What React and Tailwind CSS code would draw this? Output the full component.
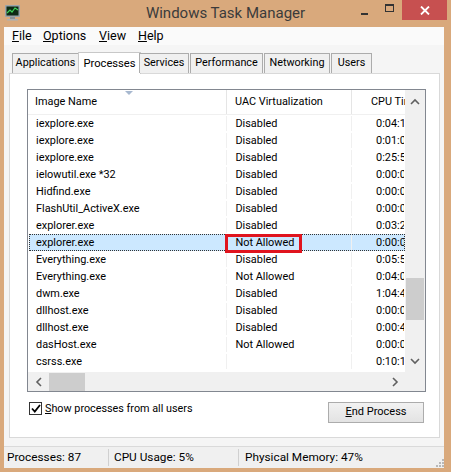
import React from 'react'

const FONT = { fontFamily: 'Roboto, "Noto Sans", sans-serif' }

const ROWS = [
  ['iexplore.exe', 'Disabled', '0:04:17'],
  ['iexplore.exe', 'Disabled', '0:01:08'],
  ['iexplore.exe', 'Disabled', '0:25:53'],
  ['ielowutil.exe *32', 'Disabled', '0:00:00'],
  ['Hidfind.exe', 'Disabled', '0:00:00'],
  ['FlashUtil_ActiveX.exe', 'Disabled', '0:00:00'],
  ['explorer.exe', 'Disabled', '0:03:21'],
  ['explorer.exe', 'Not Allowed', '0:00:00', true],
  ['Everything.exe', 'Disabled', '0:05:53'],
  ['Everything.exe', 'Not Allowed', '0:04:04'],
  ['dwm.exe', 'Disabled', '1:04:45'],
  ['dllhost.exe', 'Disabled', '0:00:00'],
  ['dllhost.exe', 'Disabled', '0:00:43'],
  ['dasHost.exe', 'Not Allowed', '0:00:00'],
  ['csrss.exe', '', '0:10:13'],
]

const TABS = [
  ['Applications', 'w-[67px]'],
  ['Processes', 'w-[63px]', true],
  ['Services', 'w-[50px]'],
  ['Performance', 'w-[73px]'],
  ['Networking', 'w-[66px]'],
  ['Users', 'w-[41px]'],
]

// small chevron used by the scrollbars
function Chevron({ dir }) {
  const d = {
    up: 'M1 6 L5 2 L9 6',
    down: 'M1 2 L5 6 L9 2',
    left: 'M6 1 L2 5 L6 9',
    right: 'M2 1 L6 5 L2 9',
  }[dir]
  const vert = dir === 'up' || dir === 'down'
  return (
    <svg width={vert ? 10 : 8} height={vert ? 8 : 10} viewBox={vert ? '0 0 10 8' : '0 0 8 10'}>
      <path d={d} fill="none" stroke="#606060" strokeWidth="1.6" />
    </svg>
  )
}

function AppIcon() {
  return (
    <svg width="17" height="17" viewBox="0 0 17 17">
      <rect x="1" y="1" width="15" height="12" rx="1" fill="#9aa3a8" />
      <rect x="2.5" y="2.5" width="12" height="9" fill="#0d2a14" />
      <path d="M3 9 L6 6 L8 8 L11 4 L14 6" fill="none" stroke="#3fd35a" strokeWidth="1.2" />
      <rect x="6" y="13" width="5" height="2" fill="#8a9296" />
      <rect x="3" y="15" width="11" height="1.5" fill="#aab1b5" />
    </svg>
  )
}

export default function App() {
  return (
    <div className="w-[451px] h-[472px] bg-[#d9a97c] flex flex-col overflow-hidden text-black" style={FONT}>

      {/* ── Title bar ── */}
      <div className="h-[27px] flex shrink-0">
        <div className="w-[100px] pl-[4px] pt-[4px]">
          <AppIcon />
        </div>
        <div className="flex-1 text-center text-[15px] leading-[27px] text-[#3b3b3b]">
          Windows Task Manager
        </div>
        <div className="w-[100px] flex justify-end items-start pr-[4px]">
          <div className="w-[24px] h-[21px] flex items-center justify-center">
            <div className="w-[7px] h-[2px] bg-[#333] mt-[6px]" />
          </div>
          <div className="w-[26px] h-[21px] flex items-center justify-center">
            <div className="w-[9px] h-[8px] border border-[#333] border-t-2 -mt-[6px]" />
          </div>
          <div className="w-[45px] h-[20px] bg-[#c75050] flex items-center justify-center">
            <svg width="10" height="9" viewBox="0 0 10 9">
              <path d="M1 0.5 L9 8.5 M9 0.5 L1 8.5" stroke="#fff" strokeWidth="1.8" />
            </svg>
          </div>
        </div>
      </div>

      {/* ── Client area ── */}
      <div className="flex-1 ml-[4px] mr-[7px] mb-[4px] bg-[#f5f5f5] flex flex-col">

        {/* Menu */}
        <div className="h-[18px] flex pl-[8px] text-[12.5px] leading-[18px] bg-[#fafafa]">
          <span className="w-[31px]"><u>F</u>ile</span>
          <span className="w-[56px]"><u>O</u>ptions</span>
          <span className="w-[39px]"><u>V</u>iew</span>
          <span><u>H</u>elp</span>
        </div>

        {/* Tabs */}
        <div className="h-[28px] flex items-end pl-[8px] relative z-10 text-[10.8px]">
          {TABS.map(([label, w, active]) => (
            <div
              key={label}
              className={
                active
                  ? `${w} h-[22px] -mb-px -mx-[2px] bg-white border border-b-0 border-[#c8c8c8] flex items-start pt-[3px] justify-center text-[11.2px]`
                  : `${w} h-[20px] mr-px bg-[#f0f0f0] border border-b-0 border-[#acacac] flex items-center justify-center`
              }
            >
              {label}
            </div>
          ))}
        </div>

        {/* Tab page */}
        <div className="h-[365px] ml-[5px] mr-[4px] bg-white border border-[#d9d9d9] flex flex-col text-[10.9px]">

          {/* List box */}
          <div className="mt-[15px] ml-[17px] mr-[13px] h-[303px] border border-[#828790] flex flex-col">
            <div className="flex h-[282px]">
              <div className="w-[377px] flex flex-col">
                {/* header */}
                <div className="h-[25px] flex items-center relative border-b border-[#f0f0f0]">
                  <svg className="absolute left-[97px] top-[1px]" width="8" height="4" viewBox="0 0 8 4">
                    <path d="M0 0 L8 0 L4 4 Z" fill="#a7b8cf" />
                  </svg>
                  <div className="w-[199px] h-full pl-[7px] flex items-center border-r border-[#e5e5e5]">Image Name</div>
                  <div className="w-[125px] h-full pl-[8px] flex items-center border-r border-[#e5e5e5]">UAC Virtualization</div>
                  <div className="w-[53px] h-full pl-[19px] flex items-center overflow-hidden whitespace-nowrap">CPU Time</div>
                </div>
                {/* rows */}
                <div className="h-[257px] flex flex-col">
                  {ROWS.map(([name, uac, cpu, sel], i) => (
                    <div
                      key={i}
                      className={`h-[17px] flex leading-[15px] ${sel ? 'bg-[#cce8ff] border border-dotted border-[#333] ml-px' : 'border border-transparent ml-px'}`}
                    >
                      <div className="w-[198px] pl-[6px] border-r border-[#f0f0f0] whitespace-nowrap">{name}</div>
                      <div className="w-[125px] pl-[8px] border-r border-[#f0f0f0] relative">
                        {uac}
                        {sel && (
                          <div className="absolute -left-[2px] -top-[1px] w-[77px] h-[19px] border-[3px] border-[#e0141e]" />
                        )}
                      </div>
                      <div className="w-[52px] pl-[24px] overflow-hidden whitespace-nowrap">{cpu}</div>
                    </div>
                  ))}
                </div>
              </div>
              {/* vertical scrollbar */}
              <div className="w-[20px] bg-[#f0f0f0] flex flex-col">
                <div className="h-[22px] flex items-center justify-center pt-[2px]"><Chevron dir="up" /></div>
                <div className="flex-1">
                  <div className="mt-[166px] h-[42px] mx-px bg-[#cdcdcd]" />
                </div>
                <div className="h-[22px] flex items-center justify-center"><Chevron dir="down" /></div>
              </div>
            </div>
            {/* horizontal scrollbar */}
            <div className="flex-1 flex bg-[#f0f0f0]">
              <div className="w-[21px] flex items-center justify-center"><Chevron dir="left" /></div>
              <div className="flex-1 flex items-center">
                <div className="w-[36px] h-[18px] bg-[#cdcdcd]" />
              </div>
              <div className="w-[21px] flex items-center justify-center"><Chevron dir="right" /></div>
              <div className="w-[20px]" />
            </div>
          </div>

          {/* checkbox + button */}
          <div className="mt-[10px] ml-[19px] mr-[15px] flex justify-between items-start">
            <div className="flex items-center gap-[3px] leading-[13px]">
              <div className="w-[13px] h-[13px] border border-[#333] bg-white flex items-center justify-center">
                <svg width="10" height="9" viewBox="0 0 10 9">
                  <path d="M1 4.5 L3.8 7.5 L9 1" fill="none" stroke="#000" strokeWidth="1.8" />
                </svg>
              </div>
              <span className="text-[10.8px]"><u>S</u>how processes from all users</span>
            </div>
            <div className="w-[96px] h-[21px] border border-[#acacac] bg-gradient-to-b from-[#f2f2f2] to-[#e3e3e3] flex items-center justify-center">
              <span className="text-[11px]"><u>E</u>nd Process</span>
            </div>
          </div>
        </div>

        {/* Status bar */}
        <div className="mt-[8px] flex-1 bg-[#f0f0f0] border-t border-[#dadada] flex items-center text-[11.8px]">
          <div className="w-[104px] pl-[3px]">Processes: 87</div>
          <div className="w-[130px] pl-[5px] border-l border-[#d0d0d0]">CPU Usage: 5%</div>
          <div className="flex-1 pl-[6px] border-l border-[#d0d0d0]">Physical Memory: 47%</div>
          <svg className="self-end mb-[1px]" width="8" height="8" viewBox="0 0 8 8">
            <rect x="6" y="0" width="2" height="2" fill="#b8b8b8" />
            <rect x="3" y="3" width="2" height="2" fill="#b8b8b8" />
            <rect x="6" y="3" width="2" height="2" fill="#b8b8b8" />
            <rect x="0" y="6" width="2" height="2" fill="#b8b8b8" />
            <rect x="3" y="6" width="2" height="2" fill="#b8b8b8" />
            <rect x="6" y="6" width="2" height="2" fill="#b8b8b8" />
          </svg>
        </div>
      </div>
    </div>
  )
}
